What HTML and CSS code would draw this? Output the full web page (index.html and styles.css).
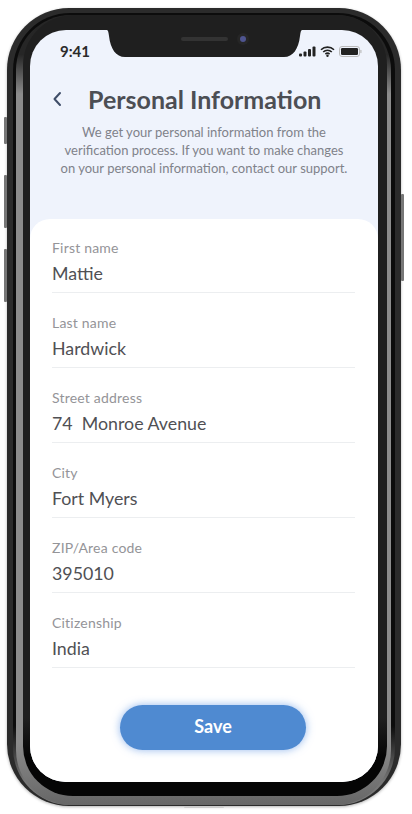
FILE: index.html
```html
<!DOCTYPE html>
<html lang="en">
<head>
    <meta charset="UTF-8">
    <meta name="viewport" content="width=device-width, initial-scale=1.0">
    <title>Personal Information</title>
    <link rel="stylesheet" href="styles.css">
</head>
<body>
    <div class="phone">
        <span class="side-btn mute"></span>
        <span class="side-btn vol-up"></span>
        <span class="side-btn vol-down"></span>
        <span class="side-btn power"></span>
        <span class="home-nub"></span>
        <div class="rim">
            <div class="steel">
                <div class="bezel">
                    <div class="screen">
                        <svg class="notch" width="195" height="27" viewBox="0 0 195 27"><path d="M0 0C1 0 1.5 2 2 6 3.500 19 9 27 18 27H177C186 27 191.500 19 193 6 193.500 2 194 0 195 0Z" fill="#1f1f1f"/></svg>
                        <span class="speaker"></span>
                        <span class="camera"></span>
                        <div class="status-bar">
                            <span class="time">9:41</span>
                            <div class="status-icons">
                                <svg width="17" height="11" viewBox="0 0 17 11"><rect x="0" y="7.5" width="3" height="3" rx="1" fill="#222"/><rect x="4.5" y="5.5" width="3" height="5" rx="1" fill="#222"/><rect x="9" y="3" width="3" height="7.5" rx="1" fill="#222"/><rect x="13.5" y="0.5" width="3" height="10" rx="1" fill="#222"/></svg>
                                <svg width="15" height="11" viewBox="0 0 15 11"><path d="M1 3.800a9.200 9.200 0 0 1 13 0M3.200 6a6 6 0 0 1 8.600 0M5.400 8.100a3 3 0 0 1 4.200 0" fill="none" stroke="#222" stroke-width="1.600"/><circle cx="7.500" cy="9.800" r="1.200" fill="#222"/></svg>
                                <svg width="23" height="11" viewBox="0 0 23 11"><rect x="0.500" y="0.500" width="20" height="10" rx="2.500" fill="none" stroke="#bbb"/><rect x="2" y="2" width="17" height="7" rx="1.200" fill="#222"/><rect x="21.300" y="3.800" width="1.200" height="3.400" rx="0.600" fill="#bbb"/></svg>
                            </div>
                        </div>
                        <div class="title-row">
                            <svg class="back" width="10" height="16" viewBox="0 0 10 16"><path d="M8 2 2.500 8 8 14" fill="none" stroke="#3f4d68" stroke-width="2" stroke-linecap="round" stroke-linejoin="round"/></svg>
                            <h1>Personal Information</h1>
                        </div>
                        <p class="intro">We get your personal information from the verification process. If you want to make changes on your personal information, contact our support.</p>
                        <div class="card">
                            <div class="field"><label>First name</label><div class="value">Mattie</div></div>
                            <div class="field"><label>Last name</label><div class="value">Hardwick</div></div>
                            <div class="field"><label>Street address</label><div class="value">74&nbsp; Monroe Avenue</div></div>
                            <div class="field"><label>City</label><div class="value">Fort Myers</div></div>
                            <div class="field"><label>ZIP/Area code</label><div class="value">395010</div></div>
                            <div class="field"><label>Citizenship</label><div class="value">India</div></div>
                            <button class="save-btn">Save</button>
                        </div>
                    </div>
                </div>
            </div>
        </div>
    </div>
</body>
</html>
```

FILE: styles.css
```css
* {
    box-sizing: border-box;
}
body {
    margin: 0;
    height: 814px;
    overflow: hidden;
    background-color: #fff;
    font-family: Lato, "Open Sans", sans-serif;
}
.phone {
    position: relative;
    width: 394px;
    height: 798px;
    margin: 8px 0 0 7px;
    padding: 5px 6px 1px 6px;
    background-color: #2b2b2b;
    border-radius: 62px;
    box-shadow: 0 1px 3px rgba(0,0,0,0.3);
}
.rim {
    height: 100%;
    padding: 2px 4px 0 3px;
    background: linear-gradient(#0c0c0c 90%, #777 97%);
    border-radius: 57px;
}
.steel {
    height: 100%;
    padding: 0 4px 9px 7px;
    background: linear-gradient(#262626 5%, #8c8c8c 10%, #8c8c8c 92%, #666 100%);
    border-radius: 55px;
}
.bezel {
    height: 100%;
    padding: 15px 9px 14px 7px;
    background: linear-gradient(#1f1f1f 90%, #050505 95%);
    border-radius: 50px;
}
.screen {
    position: relative;
    display: flex;
    flex-direction: column;
    height: 100%;
    overflow: hidden;
    background-color: #eff3fc;
    border-radius: 36px;
}
.notch {
    position: absolute;
    top: 0;
    left: 77px;
}
.speaker {
    position: absolute;
    top: 7px;
    left: 151px;
    width: 47px;
    height: 4px;
    background-color: #333;
    border-radius: 2px;
}
.camera {
    position: absolute;
    top: 6px;
    left: 210px;
    width: 6px;
    height: 6px;
    background-color: #4f5590;
    border-radius: 50%;
    box-shadow: 0 0 0 3px #262626;
}
.status-bar {
    display: flex;
    justify-content: space-between;
    align-items: center;
    height: 42px;
    padding: 0 16px 0 30px;
}
.time {
    font-size: 15px;
    font-weight: 700;
    color: #2a2a2a;
}
.status-icons {
    display: flex;
    align-items: center;
    gap: 4px;
}
.title-row {
    display: flex;
    align-items: center;
    margin-top: 11px;
    padding-left: 22px;
}
.back {
    margin-right: 26px;
}
h1 {
    margin: 0;
    font-size: 25px;
    font-weight: 700;
    line-height: 32px;
    color: #4c4e54;
}
.intro {
    margin: 8px 0 0;
    padding: 0 28px;
    font-size: 13px;
    line-height: 18px;
    text-align: center;
    color: #7f828a;
}
.card {
    flex: 1;
    margin-top: 42px;
    padding: 20px 23px 0 22px;
    background-color: #fff;
    border-radius: 20px 20px 0 0;
    display: flex;
    flex-direction: column;
}
.field {
    flex: none;
    height: 75px;
    padding-top: 21px;
    border-bottom: 1px solid #eceef0;
}
.field:first-child {
    height: 54px;
    padding-top: 0;
}
label {
    display: block;
    font-size: 14px;
    line-height: 18px;
    letter-spacing: 0.2px;
    color: #949498;
}
.value {
    margin-top: 5px;
    font-size: 17.800px;
    line-height: 23px;
    color: #505054;
}
.save-btn {
    align-self: flex-start;
    width: 186px;
    height: 45px;
    margin: 37px 0 0 68px;
    padding-bottom: 4px;
    border: none;
    border-radius: 23px;
    background-color: #4f8ad1;
    box-shadow: 0 0 8px rgba(79,138,225,0.6);
    font-family: inherit;
    font-size: 18px;
    font-weight: 700;
    color: #fff;
}
.side-btn {
    position: absolute;
    width: 3px;
    background-color: #777;
    border-radius: 1px;
}
.mute {
    left: -3px;
    top: 109px;
    height: 27px;
}
.vol-up {
    left: -3px;
    top: 167px;
    height: 53px;
}
.vol-down {
    left: -3px;
    top: 241px;
    height: 53px;
}
.power {
    right: -3px;
    top: 186px;
    height: 87px;
}
.home-nub {
    position: absolute;
    left: 177px;
    bottom: -2px;
    width: 40px;
    height: 2px;
    background-color: #ccc;
    border-radius: 1px;
}
```
